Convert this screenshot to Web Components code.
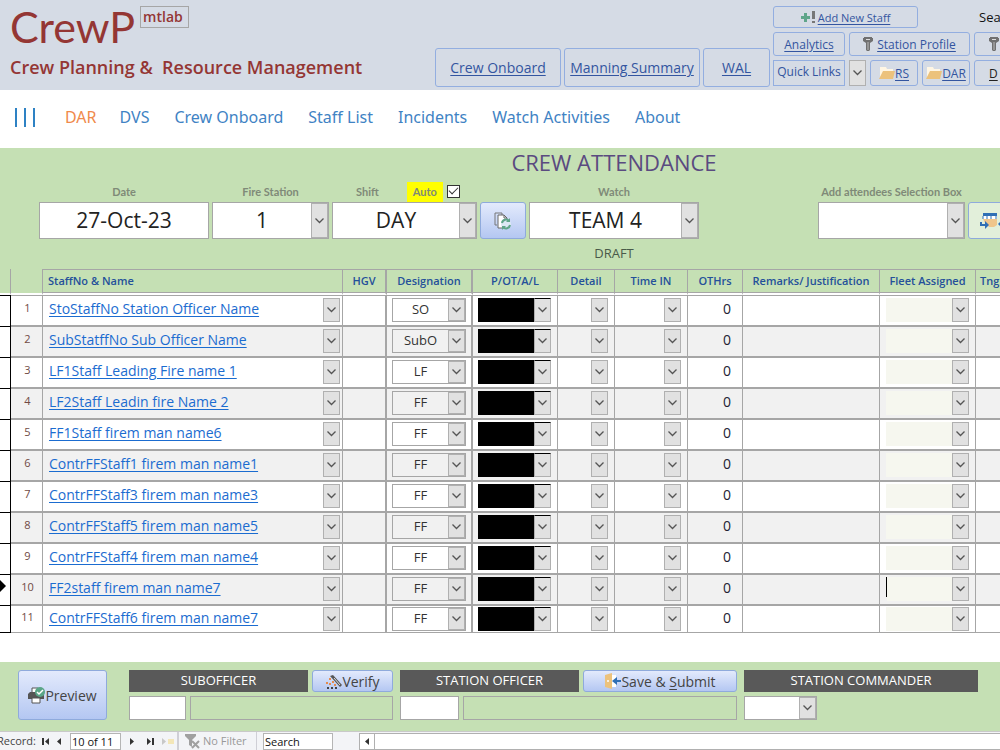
<!DOCTYPE html>
<html lang="en">
<head>
<meta charset="utf-8">
<meta name="viewport" content="width=device-width, initial-scale=1">
<title>CrewP - Crew Attendance</title>
<style>
  :root {
    --ui: "Open Sans", "Noto Sans", sans-serif;
    --green: #c5e0b4;
    --line: #a6a6a6;
    --blue: #24509a;
  }
  html, body { margin: 0; }
  body { font-family: var(--ui); background: #fff; color: #333; overflow-x: hidden; }
</style>
</head>
<body>
<crew-app></crew-app>
<script>
const ICONS = {
  plus: `<svg width="14" height="14" viewBox="0 0 14 14"><path d="M3 3h3v3h3v3H6v3H3V9H0V6h3z" fill="#5fa58a"/><path d="M11 1h3v8h-3zM11 11h3v2h-3z" fill="#777"/></svg>`,
  key: `<svg width="10" height="16" viewBox="0 0 10 16"><path d="M1 1h8v1h1v3L7 7v7l-1 1H4l-1-1V7L0 5V2h1z" fill="#707070"/><path d="M3 3h4v1H3z" fill="#ddd"/><path d="M5 6v8" stroke="#bbb"/></svg>`,
  folder: `<svg width="16" height="14" viewBox="0 0 16 14"><path d="M1 1h6l1 2h6v3H4L1 12z" fill="#fff6e4"/><path d="M4 5h12l-2 8H0z" fill="#ecc27c"/></svg>`,
  copy: `<svg width="18" height="18" viewBox="0 0 18 18"><path d="M1 1h7v2M1 1v12h2" fill="none" stroke="#777"/><path d="M4 3h6l3 3v10H4z" fill="#fff" stroke="#666"/><path d="M10 3v3h3" fill="none" stroke="#666"/><circle cx="12" cy="12" r="5" fill="#dce8f5"/><path d="M8 11a4 4 0 0 1 7-2M16 13a4 4 0 0 1-7 2" fill="none" stroke="#5fa58a" stroke-width="2"/><path d="M16 6v4h-4zM8 18v-4h4z" fill="#5fa58a"/></svg>`,
  insert: `<svg width="22" height="20" viewBox="0 0 22 20"><path d="M3 2h14v6H3z" fill="#fff"/><path d="M3 2h14v3H3z" fill="#2f6fb5"/><path d="M3 5v3M7 5v3M11 5v3M16 5v3" stroke="#2f6fb5"/><path d="M3 8h14v6l-3 2H9l-4-4z" fill="#efc58b"/><path d="M1 11v3h5" fill="none" stroke="#2f6fb5" stroke-width="2"/><path d="M5 10l4 4-4 4zM22 9l-4 4 4 4z" fill="#2f6fb5"/></svg>`,
  printer: `<svg width="17" height="17" viewBox="0 0 17 17"><path d="M4 1h6v5H4z" fill="#fff" stroke="#555"/><path d="M0 7l2-2h13l1 2v5H0z" fill="#555"/><path d="M4 11h8v5H4z" fill="#fff" stroke="#555"/><circle cx="12" cy="5" r="5" fill="#5aa587"/><path d="M9 5l2 2 4-4" fill="none" stroke="#fff" stroke-width="1.5"/></svg>`,
  wand: `<svg width="17" height="15" viewBox="0 0 17 15"><path d="M5 2l3-1 9 10-2 2z" fill="#555"/><path d="M9 4l6 7" stroke="#ddd"/><path d="M4 4h2v2H4zM7 7h2v2H7zM1 8h2v2H1zM4 9h2v2H4zM9 10h2v2H9z" fill="#e58b4e"/><path d="M2 13h2v2H2zM6 13h2v2H6zM10 13h2v2h-2z" fill="#444"/></svg>`,
  door: `<svg width="17" height="16" viewBox="0 0 17 16"><path d="M7 2h5v12H7z" fill="#fff"/><path d="M1 2l7-2v16l-7-2z" fill="#ecc27c"/><circle cx="4" cy="8" r="1" fill="#fff"/><path d="M17 8h-6" stroke="#2f6fb5" stroke-width="2"/><path d="M13 4v8L8 8z" fill="#2f6fb5"/></svg>`,
  filter: `<svg width="16" height="16" viewBox="0 0 16 16"><path d="M0 1h11v2L7 7v7l-3-2V7L0 3z" fill="#a0a0a0"/><path d="M7 8l7 7M14 8l-7 7" stroke="#a0a0a0" stroke-width="2"/></svg>`,
  chevron: `<svg width="9" height="6" viewBox="0 0 9 6"><path d="M.5.5l4 4 4-4" fill="none" stroke="#555" stroke-width="1.3"/></svg>`,
  first: `<svg width="8" height="9" viewBox="0 0 8 9"><path d="M0 1h2v7H0zM7 1v7L3 4.500z" fill="#333"/></svg>`,
  prev: `<svg width="6" height="9" viewBox="0 0 6 9"><path d="M5 1v7L1 4.500z" fill="#333"/></svg>`,
  next: `<svg width="6" height="9" viewBox="0 0 6 9"><path d="M1 1v7l4-3.500z" fill="#333"/></svg>`,
  last: `<svg width="8" height="9" viewBox="0 0 8 9"><path d="M6 1h2v7H6zM1 1v7l4-3.500z" fill="#333"/></svg>`,
  fresh: `<svg width="12" height="9" viewBox="0 0 12 9"><path d="M0 1v7l4-3.500z" fill="#c8c8c8"/><path d="M6 2h6v5H6z" fill="#f3e6b8"/></svg>`,
  current: `<svg width="6" height="12" viewBox="0 0 6 12"><path d="M0 0l6 6-6 6z" fill="#000"/></svg>`
};

function define(name, html, setup) {
  const t = document.createElement('template');
  t.innerHTML = html;
  customElements.define(name, class extends HTMLElement {
    constructor() { super(); this.attachShadow({ mode: 'open' }); }
    connectedCallback() {
      if (this.shadowRoot.childNodes.length) return;
      this.shadowRoot.append(t.content.cloneNode(true));
      if (setup) setup(this, this.shadowRoot);
    }
  });
}

define('ui-icon', `<style>:host{display:inline-flex;flex:none}svg{display:block}</style>`,
  (el, root) => root.append(document.createRange().createContextualFragment(ICONS[el.getAttribute('name')])));

/* Drop-down: a native select beside a grey arrow block. */
define('combo-box', `<style>
  :host{display:flex;box-sizing:border-box;height:24px;min-width:0;font-size:13px;color:#333}
  :host([boxed]){border:1px solid var(--line);background:var(--fill,#fff)}
  select{appearance:none;flex:1;min-width:0;width:0;border:0;padding:0 0 2px;margin:0;background:var(--field,transparent);font:inherit;color:inherit;text-align:center;text-align-last:center;outline:0;border-radius:0}
  span{flex:none;width:17px;box-sizing:border-box;border:1px solid #b0b0b0;border-top-color:var(--top,#b0b0b0);background:#e1e1e1;display:flex;align-items:center;justify-content:center;pointer-events:none}
</style><select><option></option></select><span><ui-icon name="chevron"></ui-icon></span>`,
  (el, root) => {
    root.querySelector('select').setAttribute('aria-label', el.getAttribute('label') || '');
    root.querySelector('option').textContent = el.getAttribute('value') || '';
  });

define('link-button', `<style>
  :host{display:flex;box-sizing:border-box;min-width:0}
  a{flex:1;display:flex;align-items:center;justify-content:var(--pack,center);padding-left:var(--lead,0);gap:var(--gap,3px);border:1px solid #93aee0;border-radius:3px;color:var(--link,#3355a0);text-decoration:none;white-space:nowrap}
  b{font-weight:400;text-decoration:underline;text-underline-offset:2px}
</style><a href="#"><slot name="icon"></slot><b><slot></slot></b></a>`);

define('push-button', `<style>
  :host{display:flex;min-width:0}
  button{flex:1;min-width:0;padding:0;border:1px solid #8faadc;border-radius:3px;background:var(--face,linear-gradient(#e3eafc,#b4c7f2));font:inherit;color:#444;display:flex;align-items:center;justify-content:center;white-space:nowrap}
</style><button type="button"><slot></slot></button>`,
  (el, root) => { if (el.hasAttribute('label')) root.querySelector('button').setAttribute('aria-label', el.getAttribute('label')); });

define('crew-header', `<style>
  :host{display:grid;grid-template-columns:1fr auto 227px;column-gap:3px;height:90px;box-sizing:border-box;background:#d5dbe5;overflow:hidden}
  .brand{padding:4px 0 0 10px;color:#943634;white-space:nowrap}
  .name{display:flex;align-items:flex-start;gap:5px;height:48px}
  h1{margin:0;font:400 43px/46px Lato,var(--ui)}
  .tag{margin-top:2px;border:1px solid #a6a6a6;padding:0 5px 0 2px;font-size:14px;line-height:20px;font-weight:600}
  .sub{margin:0;font-size:18px;line-height:30px;font-weight:600;white-space:pre}
  .main{display:grid;grid-template-columns:126px 136px 67px;gap:3px;align-self:end;height:39px;margin-bottom:3px;font-size:14px}
  .tools{display:grid;grid-template-rows:22px 24px 26px;row-gap:4px;padding-top:6px;font-size:12px}
  .row{display:grid;column-gap:4px}
  .r1{grid-template-columns:145px 1fr;font-size:11px}
  .r2{grid-template-columns:72px 121px 1fr}
  .r3{grid-template-columns:72px 17px 48px 48px 1fr}
  .sea{padding-left:57px;font-size:13px;line-height:22px;color:#111}
  .quick{border:1px solid #93aee0;color:#3355a0;line-height:22px;text-align:center;white-space:nowrap}
  combo-box{height:auto}
  .r3{--gap:0px}
  .r2{--gap:4px}
  .end{--link:#222;--pack:flex-start;--lead:14px;margin-right:-12px}
</style>
<div class="brand"><div class="name"><h1>CrewP</h1><span class="tag">mtlab</span></div><p class="sub">Crew Planning &amp;  Resource Management</p></div>
<div class="main"><link-button>Crew Onboard</link-button><link-button>Manning Summary</link-button><link-button>WAL</link-button></div>
<div class="tools">
  <div class="row r1"><link-button><ui-icon slot="icon" name="plus"></ui-icon>Add New Staff</link-button><span class="sea">Sea</span></div>
  <div class="row r2"><link-button>Analytics</link-button><link-button><ui-icon slot="icon" name="key"></ui-icon>Station Profile</link-button><link-button class="end"><ui-icon slot="icon" name="key"></ui-icon></link-button></div>
  <div class="row r3"><span class="quick">Quick Links</span><combo-box label="Quick Links"></combo-box><link-button><ui-icon slot="icon" name="folder"></ui-icon>RS</link-button><link-button><ui-icon slot="icon" name="folder"></ui-icon>DAR</link-button><link-button class="end">D</link-button></div>
</div>`);

define('crew-nav', `<style>
  :host{display:flex;align-items:center;height:58px;box-sizing:border-box;padding:0 15px 4px;gap:25px;font:16px/20px "Noto Sans","DejaVu Sans",sans-serif;white-space:nowrap}
  .bars{display:flex;gap:7px;margin-right:5px}
  .bars i{width:2px;height:19px;background:#2e82c4}
  a{color:#3f83c4;text-decoration:none}
  .on{color:#f08a4b;margin-right:-2px}
</style>
<span class="bars"><i></i><i></i><i></i></span>
<a class="on" href="#">DAR</a><a href="#">DVS</a><a href="#">Crew Onboard</a><a href="#">Staff List</a><a href="#">Incidents</a><a href="#">Watch Activities</a><a href="#">About</a>`);

define('crew-filters', `<style>
  :host{display:grid;grid-template-columns:170px 117px 145px 46px 170px 1fr 147px 32px;grid-template-rows:28px 26px 37px 30px;column-gap:3px;padding-left:39px;background:var(--green);overflow:hidden}
  h2{grid-area:1/5;justify-self:center;margin:0;font:400 22px/28px var(--ui);color:#5a4a80;white-space:nowrap}
  label,.lab{grid-row:2;align-self:end;font:700 11px/20px Lato,var(--ui);color:#7f8a78;text-align:center;white-space:nowrap}
  .shift{grid-column:3;display:flex;align-items:center}
  .shift span{padding:0 28px 0 24px}
  .shift label{background:#ff0;padding:0 6px}
  input[type=checkbox]{appearance:none;margin:0 0 2px 4px;width:13px;height:13px;border:1px solid #333;background:#fff;display:grid;place-items:center}
  input[type=checkbox]:checked::after{content:"";width:8px;height:4px;border:solid #333;border-width:0 0 1px 1px;transform:rotate(-45deg);margin-bottom:3px}
  .c{grid-row:3;height:auto;font-size:21px;color:#222}
  input.c{box-sizing:border-box;width:100%;border:1px solid var(--line);text-align:center;font-family:inherit;padding:0 0 2px;background:#fff}
  .draft{grid-area:4/5;text-align:center;font-size:13px;line-height:28px;color:#4a5a4a}
  .add{width:46px;--face:#e2efda}
</style>
<h2>CREW ATTENDANCE</h2>
<label for="date" style="grid-column:1">Date</label><span class="lab" style="grid-column:2">Fire Station</span>
<div class="lab shift"><span>Shift</span><label for="auto">Auto</label><input id="auto" type="checkbox" checked></div>
<span class="lab" style="grid-column:5">Watch</span><span class="lab" style="grid-column:7">Add attendees Selection Box</span>
<input id="date" class="c" style="grid-column:1" value="27-Oct-23">
<combo-box class="c" style="grid-column:2" boxed label="Fire Station" value="1"></combo-box>
<combo-box class="c" style="grid-column:3" boxed label="Shift" value="DAY"></combo-box>
<push-button class="c" style="grid-column:4" label="Refresh"><ui-icon name="copy"></ui-icon></push-button>
<combo-box class="c" style="grid-column:5" boxed label="Watch" value="TEAM 4"></combo-box>
<combo-box class="c" style="grid-column:7" boxed label="Add attendees"></combo-box>
<push-button class="c add" style="grid-column:8" label="Add attendees"><ui-icon name="insert"></ui-icon></push-button>
<span class="draft">DRAFT</span>`);

define('crew-table', `<style>
  :host{display:block;overflow:hidden}
  table{width:100%;table-layout:fixed;border-collapse:separate;border-spacing:0}
  th,td{box-sizing:border-box;padding:0;border-right:1px solid var(--line);white-space:nowrap;font-weight:400}
  thead th{height:26px;background:var(--green);border-bottom:2px solid #fff;box-shadow:inset 0 1px var(--line),inset 0 -1px var(--line);font-size:11px;font-weight:600;color:var(--blue);line-height:22px}
  thead th:nth-child(-n+2){box-shadow:none}
  thead th:nth-child(3){text-align:left;padding-left:5px}
  thead th:last-child,tbody td:last-child{border-right:0}
  thead th:last-child{text-align:left;padding-left:4px}
  tbody td,tbody th{height:31px;border-bottom:2px solid var(--line);vertical-align:top;padding-top:2px}
  tbody tr:nth-child(even)>*{background:#f1f1f1;--fill:#f1f1f1}
  tbody tr:first-child>*{height:32px;border-top:1px solid var(--line)}
  tbody tr:last-child>*{height:27px;border-bottom-width:1px;padding-top:1px}
  tbody tr>.sel{background:#fff;border-color:#000;border-bottom-width:1px;padding:0}
  tbody tr>.num{font-size:11px;line-height:20px;text-align:center;color:#704a44;padding-left:2px}
  .w{border-right-width:2px}
  .cell{display:flex;justify-content:flex-end;padding:0 6px}
  .cell combo-box{flex:0 0 17px}
  .name{padding:0 2px 0 6px;justify-content:space-between}
  a{color:#1b6cd0;font-size:14px;line-height:22px;text-underline-offset:2px}
  .cell .des{flex:1}
  .des-cell{padding:0 5px}
  .pot{padding:0 6px 0 5px;--field:#000;--top:#000}
  .cell .full{flex:1}
  .fleet{padding:0 6px;--field:#f6f7ef}
  tbody tr>.zero{text-align:center;font-size:14px;line-height:22px;padding-left:24px;color:#223}
  .caret{flex:none;width:1px;height:20px;background:#000}
</style>
<table><colgroup><col style="width:11px"><col style="width:32px"><col style="width:300px"><col style="width:44px"><col style="width:86px"><col style="width:85px"><col style="width:57px"><col style="width:73px"><col style="width:55px"><col style="width:137px"><col style="width:96px"><col></colgroup>
<thead><tr><th></th><th></th><th scope="col">StaffNo &amp; Name</th><th scope="col" class="w">HGV</th><th scope="col" class="w">Designation</th><th scope="col">P/OT/A/L</th><th scope="col">Detail</th><th scope="col">Time IN</th><th scope="col">OTHrs</th><th scope="col">Remarks/ Justification</th><th scope="col">Fleet Assigned</th><th scope="col">Tng</th></tr></thead><tbody></tbody></table>`,
  (el, root) => {
    const rows = [['StoStaffNo Station Officer Name', 'SO'], ['SubStatffNo Sub Officer Name', 'SubO'], ['LF1Staff Leading Fire name 1', 'LF'], ['LF2Staff Leadin fire Name 2', 'FF'], ['FF1Staff firem man name6', 'FF'], ['ContrFFStaff1 firem man name1', 'FF'], ['ContrFFStaff3 firem man name3', 'FF'], ['ContrFFStaff5 firem man name5', 'FF'], ['ContrFFStaff4 firem man name4', 'FF'], ['FF2staff firem man name7', 'FF'], ['ContrFFStaff6 firem man name7', 'FF']];
    root.querySelector('tbody').innerHTML = rows.map(([n, d], i) => `<tr>
      <td class="sel">${i === 9 ? '<ui-icon name="current"></ui-icon>' : ''}</td><td class="num">${i + 1}</td>
      <td><div class="cell name"><a href="#">${n}</a><combo-box label="Staff"></combo-box></div></td><td class="w"></td>
      <td class="w"><div class="cell des-cell"><combo-box class="des" boxed label="Designation" value="${d}"></combo-box></div></td>
      <td><div class="cell pot"><combo-box class="full" label="P/OT/A/L"></combo-box></div></td>
      <td><div class="cell"><combo-box label="Detail"></combo-box></div></td>
      <td><div class="cell"><combo-box label="Time in"></combo-box></div></td>
      <td class="zero">0</td><td></td>
      <td><div class="cell fleet">${i === 9 ? '<span class="caret"></span>' : ''}<combo-box class="full" label="Fleet"></combo-box></div></td><td></td></tr>`).join('');
  });

define('crew-signoff', `<style>
  :host{display:grid;grid-template-columns:89px 264px 337px 234px;column-gap:7px;padding:8px 0 11px 18px;background:var(--green);font-size:14px;overflow:hidden}
  .g{display:grid;grid-template-rows:22px 24px;gap:4px}
  :host{grid-template-columns:104px 264px 337px 234px}
  .preview{margin-right:15px}
  .a{grid-template-columns:57px 118px 1fr}
  .b{grid-template-columns:59px 116px 1fr}
  .d{grid-template-columns:73px 1fr}
  h3{margin:0;background:#595959;color:#fff;font:400 13px/20px var(--ui);text-align:center;grid-column:span 2}
  input{box-sizing:border-box;width:100%;min-width:0;border:1px solid var(--line);background:#fff;padding:0}
  input.wide{grid-column:span 2;background:transparent}
  u{text-underline-offset:2px}
</style>
<push-button class="preview"><ui-icon name="printer"></ui-icon>Preview</push-button>
<div class="g a"><h3>SUBOFFICER</h3><push-button><ui-icon name="wand"></ui-icon>Verify</push-button><input aria-label="Subofficer number"><input class="wide" aria-label="Subofficer name"></div>
<div class="g b"><h3>STATION OFFICER</h3><push-button><ui-icon name="door"></ui-icon><span>Save &amp; <u>S</u>ubmit</span></push-button><input aria-label="Station officer number"><input class="wide" aria-label="Station officer name"></div>
<div class="g d"><h3>STATION COMMANDER</h3><combo-box boxed label="Station commander"></combo-box></div>`);

define('record-bar', `<style>
  :host{display:flex;align-items:center;height:19px;background:#f3f4f7;border-top:1px solid #c9c9c9;box-sizing:border-box;font-size:11px;line-height:16px;white-space:nowrap;overflow:hidden;color:#444}
  .rec{margin-left:-3px;width:45px}
  button{border:0;background:none;padding:0;display:flex;flex:none;justify-content:center;width:18px}
  .edge{width:8px}
  input{box-sizing:border-box;height:17px;border:1px solid #b5b5b5;padding:0 1px;font:11px/15px var(--ui);color:#111;min-width:0;background:#fff}
  .pos{width:51px;margin:0 2px}
  .filter{display:flex;align-items:center;gap:2px;width:80px;box-sizing:border-box;padding-left:6px;border:solid #cfcfd6;border-width:0 1px 0 2px;color:#999;height:18px;margin-right:6px}
  .find{width:70px}
  .scroll{flex:1;display:flex;height:15px;margin-left:26px;border:1px solid #b0b0b0;background:#fff;border-right:0}
  .scroll button{width:15px;border-right:1px solid #b0b0b0;align-items:center}
</style>
<span class="rec">Record:</span><button class="edge" aria-label="First"><ui-icon name="first"></ui-icon></button><button aria-label="Previous"><ui-icon name="prev"></ui-icon></button>
<input class="pos" aria-label="Record position" value="10 of 11"><button aria-label="Next"><ui-icon name="next"></ui-icon></button><button aria-label="Last"><ui-icon name="last"></ui-icon></button><button aria-label="New"><ui-icon name="fresh"></ui-icon></button>
<span class="filter"><ui-icon name="filter"></ui-icon>No Filter</span><input class="find" aria-label="Search" value="Search">
<div class="scroll"><button aria-label="Scroll left"><ui-icon name="prev"></ui-icon></button></div>`);

define('crew-app', `<style>
  :host{display:flex;flex-direction:column;min-height:100vh}
  crew-signoff{margin-top:auto}
</style><crew-header></crew-header><crew-nav></crew-nav><crew-filters></crew-filters><crew-table></crew-table><crew-signoff></crew-signoff><record-bar></record-bar>`);
</script>
</body>
</html>
